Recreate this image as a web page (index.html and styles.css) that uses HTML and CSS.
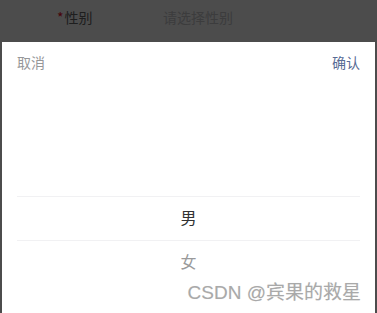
FILE: index.html
```html
<!DOCTYPE html>
<html lang="zh-CN">

<head>
    <meta charset="UTF-8">
    <meta name="viewport" content="width=device-width, initial-scale=1.0">
    <title></title>
    <link rel="stylesheet" href="styles.css">
</head>

<body>
    <div class="page">
        <div class="field">
            <span class="field-label"><i class="required">*</i>性别</span>
            <span class="field-value">请选择性别</span>
        </div>

        <div class="overlay"></div>

        <div class="popup">
            <div class="picker-toolbar">
                <button class="picker-cancel">取消</button>
                <button class="picker-confirm">确认</button>
            </div>
            <div class="picker-columns">
                <ul class="picker-column">
                    <li class="picker-item selected">男</li>
                    <li class="picker-item">女</li>
                </ul>
                <div class="picker-frame"></div>
            </div>
            <div class="watermark">CSDN @宾果的救星</div>
        </div>
    </div>
</body>

</html>
```

FILE: styles.css
```css
body {
    margin: 0;
    font-family: "Noto Sans CJK SC", "Liberation Sans", sans-serif;
    background-color: white;
}

.page {
    position: relative;
    height: 313px;
    overflow: hidden;
}

.field {
    display: flex;
    align-items: center;
    height: 34px;
    padding-left: 57px;
    font-size: 14px;
}

.field-label {
    width: 106px;
    color: #646566;
}

.required {
    font-style: normal;
    color: #ee0a24;
    margin-right: 1px;
}

.field-value {
    color: #c8c9cc;
}

.overlay {
    position: absolute;
    top: 0;
    left: 0;
    right: 0;
    bottom: 0;
    background-color: rgba(0, 0, 0, 0.7);
}

.popup {
    position: absolute;
    top: 42px;
    left: 2px;
    right: 2px;
    bottom: 0;
    background-color: white;
}

.picker-toolbar {
    display: flex;
    justify-content: space-between;
    align-items: center;
    height: 44px;
}

.picker-toolbar button {
    height: 100%;
    padding: 0 15px 4px;
    border: none;
    background: none;
    font-family: inherit;
    font-size: 14px;
    line-height: 20px;
    cursor: pointer;
}

.picker-cancel {
    color: #969799;
}

.picker-confirm {
    color: #576b95;
}

.picker-columns {
    position: relative;
    height: 264px;
}

.picker-column {
    list-style: none;
    margin: 0;
    padding: 110px 0 0;
}

.picker-item {
    height: 44px;
    display: flex;
    justify-content: center;
    align-items: center;
    padding-bottom: 2px;
    box-sizing: border-box;
    font-size: 16px;
    color: #9a9a9b;
}

.picker-item.selected {
    color: #323233;
}

.picker-frame {
    position: absolute;
    top: 110px;
    left: 15px;
    right: 15px;
    height: 43px;
    border-top: 1px solid #f1f1f3;
    border-bottom: 1px solid #f1f1f3;
}

.watermark {
    position: absolute;
    right: 14px;
    bottom: 9px;
    font-family: "Liberation Sans", "Noto Sans CJK SC", sans-serif;
    font-size: 19px;
    color: #a9a9a9;
    text-shadow: 0 0 1px #e5e5e5;
}
```
